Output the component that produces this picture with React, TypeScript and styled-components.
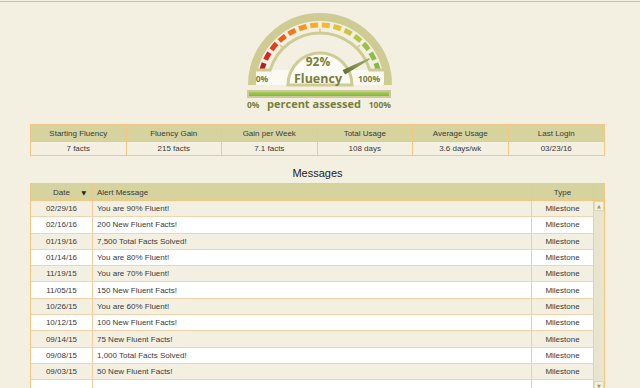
import React from "react";
import styled, { createGlobalStyle } from "styled-components";

const GlobalStyle = createGlobalStyle`
  html, body {
    margin: 0;
    padding: 0;
    overflow: hidden;
    background: #f3f0e2;
  }
  body {
    font-family: "Liberation Sans", Arial, sans-serif;
  }
`;

const Page = styled.div`
  padding-top: 1px;
`;

const TopRule = styled.div`
  height: 1px;
  background: #c6c2ac;
`;

const GaugeWrap = styled.div`
  display: flex;
  justify-content: center;
  margin-top: 2px;

  svg {
    display: block;
  }
`;

const StatsGrid = styled.div`
  margin: 10px 0 0 30px;
  width: 575px;
  box-sizing: border-box;
  border: 1px solid #f4c682;
  display: grid;
  grid-template-columns: repeat(6, 1fr);
`;

const StatCell = styled.div<{ $head?: boolean }>`
  height: ${(p) => (p.$head ? 16 : 13)}px;
  display: flex;
  align-items: center;
  justify-content: center;
  font-size: 8px;
  color: #3a3a3a;
  background: ${(p) => (p.$head ? "#d6d39e" : "#f3f0e2")};
  border-right: 1px solid #f4c682;
  border-bottom: ${(p) => (p.$head ? "1px solid #f4c682" : "none")};

  &:nth-child(6n) {
    border-right: none;
  }
`;

const MsgSection = styled.div`
  margin-left: 30px;
  width: 575px;
`;

const Title = styled.div`
  margin-top: 10px;
  height: 14px;
  line-height: 14px;
  text-align: center;
  font-size: 11px;
  color: #222;
  margin-bottom: 3px;
`;

const MsgTable = styled.div`
  box-sizing: border-box;
  border: 1px solid #f4c682;
  border-bottom: none;
`;

const HeadRow = styled.div`
  display: grid;
  grid-template-columns: 62px 1fr 62px 10px;
  height: 16px;
  background: #d6d39e;
  border-bottom: 1px solid #f4c682;
`;

const HeadCell = styled.div<{ $align?: "left" | "center" }>`
  display: flex;
  align-items: center;
  justify-content: ${(p) => (p.$align === "left" ? "flex-start" : "center")};
  padding-left: ${(p) => (p.$align === "left" ? "4px" : "0")};
  font-size: 8px;
  color: #3a3a3a;
  border-right: 1px solid #f0c68c;

  &:last-child {
    border-right: none;
  }
`;

const DateHead = styled(HeadCell)`
  justify-content: space-between;
  padding: 0 6px 0 22px;
`;

const SortArrow = styled.span`
  font-family: "DejaVu Sans", sans-serif;
  font-size: 6px;
  color: #222;
`;

const Body = styled.div`
  display: flex;
  height: 190px;
  overflow: hidden;
`;

const Rows = styled.div`
  flex: 1;
`;

const Row = styled.div<{ $alt: boolean }>`
  display: grid;
  grid-template-columns: 62px 1fr 62px;
  height: 16.3px;
  box-sizing: border-box;
  border-bottom: 1px solid #f1d3ad;
  background: ${(p) => (p.$alt ? "#ffffff" : "#f3f0e2")};
`;

const Cell = styled.div<{ $align?: "left" | "center" }>`
  display: flex;
  align-items: center;
  justify-content: ${(p) => (p.$align === "left" ? "flex-start" : "center")};
  padding-left: ${(p) => (p.$align === "left" ? "4px" : "0")};
  font-size: 8px;
  color: #3a3a3a;
  border-right: 1px solid #f2cba0;
  white-space: nowrap;
`;

const ScrollTrack = styled.div`
  width: 10px;
  background: #e8e5ce;
  display: flex;
  flex-direction: column;
  justify-content: space-between;
`;

const ScrollButton = styled.div`
  height: 10px;
  box-sizing: border-box;
  background: #f4f2df;
  border: 1px solid #dcd8b8;
  display: flex;
  align-items: center;
  justify-content: center;
  font-family: "DejaVu Sans", sans-serif;
  font-size: 5px;
  color: #9c9a80;
`;

const stats = [
  ["Starting Fluency", "7 facts"],
  ["Fluency Gain", "215 facts"],
  ["Gain per Week", "7.1 facts"],
  ["Total Usage", "108 days"],
  ["Average Usage", "3.6 days/wk"],
  ["Last Login", "03/23/16"],
];

const messages = [
  ["02/29/16", "You are 90% Fluent!"],
  ["02/16/16", "200 New Fluent Facts!"],
  ["01/19/16", "7,500 Total Facts Solved!"],
  ["01/14/16", "You are 80% Fluent!"],
  ["11/19/15", "You are 70% Fluent!"],
  ["11/05/15", "150 New Fluent Facts!"],
  ["10/26/15", "You are 60% Fluent!"],
  ["10/12/15", "100 New Fluent Facts!"],
  ["09/14/15", "75 New Fluent Facts!"],
  ["09/08/15", "1,000 Total Facts Solved!"],
  ["09/03/15", "50 New Fluent Facts!"],
  ["", ""],
];

const segColors = [
  "#b51f24", "#d42a22", "#e0401f", "#ec5a1c", "#f27a1c", "#f7951f", "#fbab2a",
  "#f4b934", "#e4c23e", "#cbc548", "#b2c44a", "#9cc14b", "#8dbd4a", "#86b84a",
];

// point on a circle round the gauge centre, angle in degrees (0 = right, 90 = up)
const pt = (r: number, deg: number) => {
  const a = (deg * Math.PI) / 180;
  return [320 + r * Math.cos(a), 85 - r * Math.sin(a)];
};

const arc = (r: number, from: number, to: number) => {
  const [x0, y0] = pt(r, from);
  const [x1, y1] = pt(r, to);
  return `M ${x0} ${y0} A ${r} ${r} 0 0 1 ${x1} ${y1}`;
};

const olive = "#cfcb94";
const textOlive = "#7a7e3f";

const Gauge = () => {
  const step = 156 / segColors.length;
  const needleDeg = 28;
  const [bx, by] = pt(27, needleDeg);
  const [tx, ty] = pt(56, needleDeg);
  const nx = Math.sin((needleDeg * Math.PI) / 180);
  const ny = Math.cos((needleDeg * Math.PI) / 180);
  const needle = [
    [bx + nx * 2.6, by + ny * 2.6],
    [tx + nx * 0.8, ty + ny * 0.8],
    [tx - nx * 0.8, ty - ny * 0.8],
    [bx - nx * 2.6, by - ny * 2.6],
  ]
    .map((p) => p.join(","))
    .join(" ");

  return (
    <svg width="160" height="110" viewBox="240 4 160 110">
      <defs>
        <linearGradient id="needleFill" x1="0" y1="1" x2="1" y2="0">
          <stop offset="0" stopColor="#5e6b2a" />
          <stop offset="1" stopColor="#a9b46c" />
        </linearGradient>
        <linearGradient id="barFill" x1="0" y1="0" x2="0" y2="1">
          <stop offset="0" stopColor="#a6cd5c" />
          <stop offset="1" stopColor="#84b53a" />
        </linearGradient>
      </defs>

      <path d={arc(68, 180, 0)} fill="none" stroke={olive} strokeWidth="8" />
      <rect x="256" y="70" width="128" height="15" fill="#fbfaf2" />

      {segColors.map((c, i) => {
        const a0 = 168 - i * step - step * 0.16;
        const a1 = a0 - step * 0.68;
        return <path key={i} d={arc(60, a0, a1)} fill="none" stroke={c} strokeWidth="5" />;
      })}

      <path
        d="M 256 70 L 270.2 70 A 52 52 0 0 1 369.8 70 L 384 70"
        fill="none"
        stroke={olive}
        strokeWidth="3"
      />
      {[135, 90, 45].map((d) => {
        const [x0, y0] = pt(52, d);
        const [x1, y1] = pt(56.5, d);
        return <line key={d} x1={x0} y1={y0} x2={x1} y2={y1} stroke={olive} strokeWidth="1.5" />;
      })}

      <path d="M 288 85 A 32 32 0 0 1 352 85 Z" fill="#fdfcf4" stroke={olive} strokeWidth="3" />
      <polygon points={needle} fill="url(#needleFill)" />

      <g fontFamily="'Open Sans', 'DejaVu Sans', sans-serif" fontWeight="700" fill={textOlive}>
        <text x="318" y="65.5" fontSize="12" textAnchor="middle">92%</text>
        <text x="318" y="83" fontSize="12.5" textAnchor="middle">Fluency</text>
        <text x="262" y="82" fontSize="8.5" textAnchor="middle">0%</text>
        <text x="369" y="82" fontSize="8.5" textAnchor="middle">100%</text>

        <rect x="247" y="90" width="144" height="8" fill="#cdc99c" />
        <rect x="249" y="92" width="140" height="4" fill="url(#barFill)" />

        <text x="247" y="107.5" fontSize="8.5">0%</text>
        <text x="314" y="107.5" fontSize="11" textAnchor="middle">percent assessed</text>
        <text x="391" y="107.5" fontSize="8.5" textAnchor="end">100%</text>
      </g>
    </svg>
  );
};

const App = () => {
  return (
    <Page>
      <GlobalStyle />
      <TopRule />
      <GaugeWrap>
        <Gauge />
      </GaugeWrap>

      <StatsGrid>
        {stats.map(([label]) => (
          <StatCell $head key={label}>{label}</StatCell>
        ))}
        {stats.map(([label, value]) => (
          <StatCell key={label + "v"}>{value}</StatCell>
        ))}
      </StatsGrid>

      <MsgSection>
        <Title>Messages</Title>
        <MsgTable>
          <HeadRow>
            <DateHead>
              Date <SortArrow>▼</SortArrow>
            </DateHead>
            <HeadCell $align="left">Alert Message</HeadCell>
            <HeadCell>Type</HeadCell>
            <HeadCell />
          </HeadRow>
          <Body>
            <Rows>
              {messages.map(([date, text], i) => (
                <Row $alt={i % 2 === 1} key={i}>
                  <Cell>{date}</Cell>
                  <Cell $align="left">{text}</Cell>
                  <Cell>{date ? "Milestone" : ""}</Cell>
                </Row>
              ))}
            </Rows>
            <ScrollTrack>
              <ScrollButton>▲</ScrollButton>
              <ScrollButton>▼</ScrollButton>
            </ScrollTrack>
          </Body>
        </MsgTable>
      </MsgSection>
    </Page>
  );
};

export default App;
